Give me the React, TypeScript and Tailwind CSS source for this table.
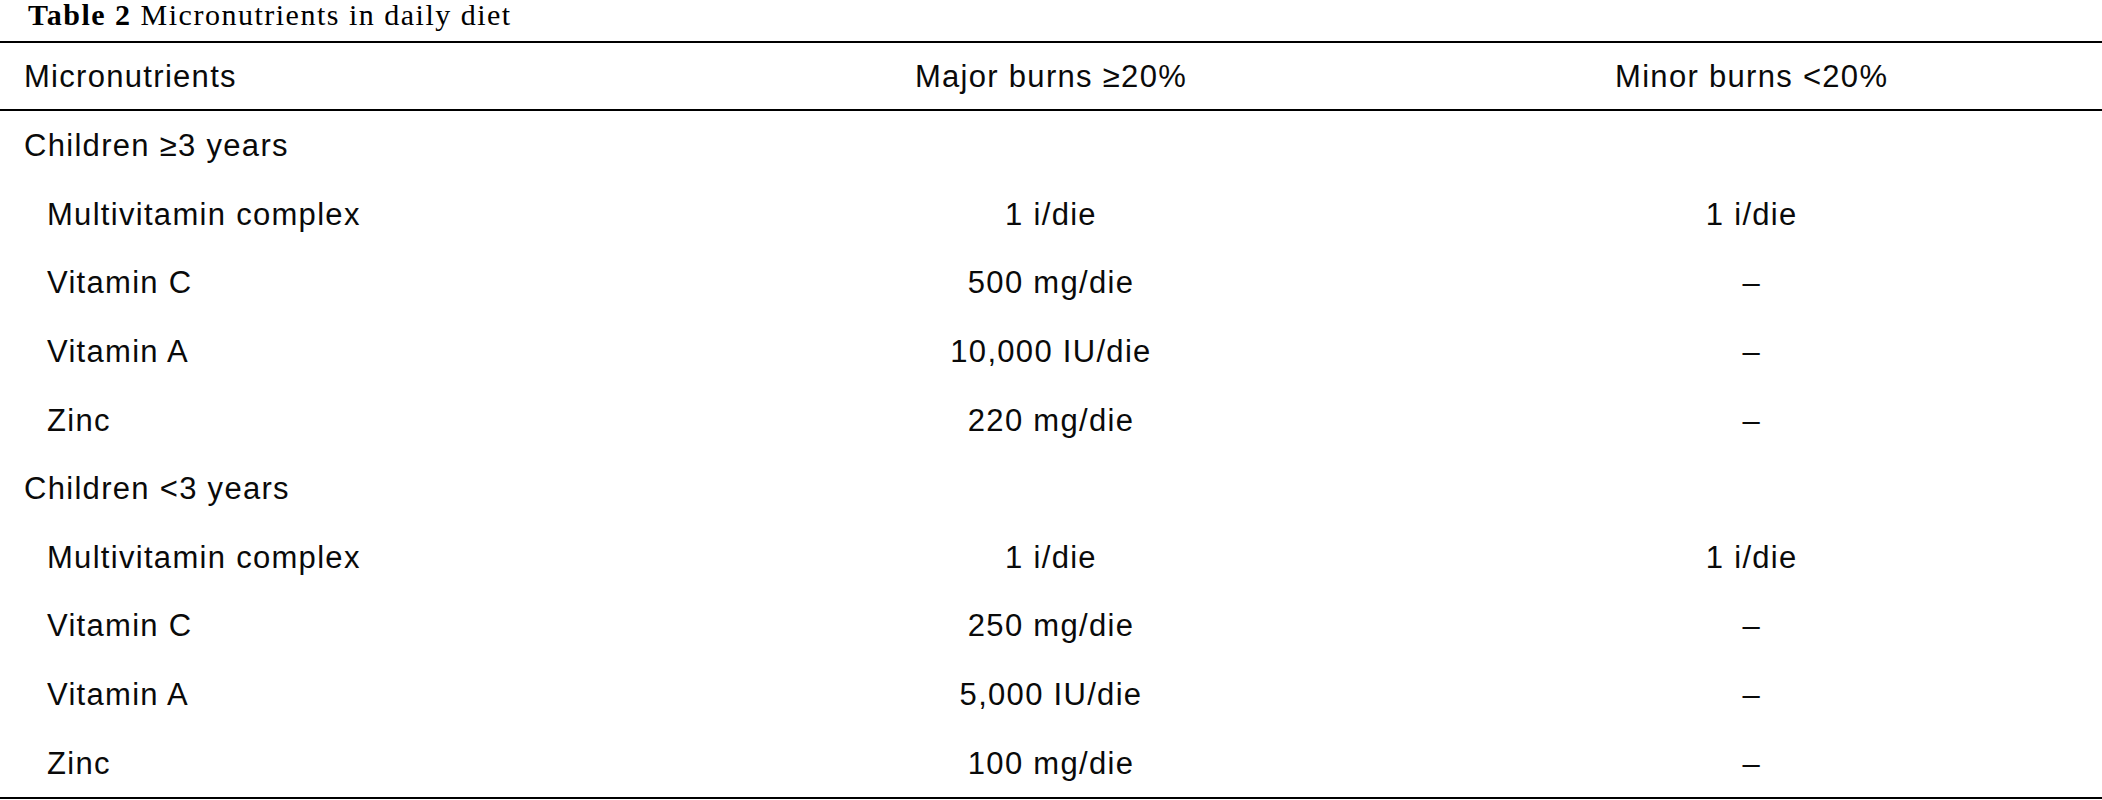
import React from "react";

type Row = { label: string; major: string; minor: string; group?: boolean };

const rows: Row[] = [
  { label: "Children ≥3 years", major: "", minor: "", group: true },
  { label: "Multivitamin complex", major: "1 i/die", minor: "1 i/die" },
  { label: "Vitamin C", major: "500 mg/die", minor: "–" },
  { label: "Vitamin A", major: "10,000 IU/die", minor: "–" },
  { label: "Zinc", major: "220 mg/die", minor: "–" },
  { label: "Children <3 years", major: "", minor: "", group: true },
  { label: "Multivitamin complex", major: "1 i/die", minor: "1 i/die" },
  { label: "Vitamin C", major: "250 mg/die", minor: "–" },
  { label: "Vitamin A", major: "5,000 IU/die", minor: "–" },
  { label: "Zinc", major: "100 mg/die", minor: "–" },
];

export default function App() {
  return (
    <div className="w-[2102px] h-[800px] bg-white text-black overflow-hidden">
      <div
        className="h-[41px] pl-[28px] pt-[2px] text-[30px] leading-[26px] tracking-[1.5px] text-black whitespace-nowrap"
        style={{ fontFamily: '"Liberation Serif", "Times New Roman", serif' }}
      >
        <span className="font-bold">Table 2</span> Micronutrients in daily diet
      </div>
      <div
        className="border-t-2 border-b-2 border-black text-[31px] leading-[40px] tracking-[1.3px] text-[#0a0a0a]"
        style={{ fontFamily: '"Liberation Sans", Arial, sans-serif' }}
      >
        <div className="grid grid-cols-3 h-[68px] items-center pt-[2px] border-b-2 border-black">
          <div className="pl-[24px]">Micronutrients</div>
          <div className="text-center">Major burns ≥20%</div>
          <div className="text-center">Minor burns &lt;20%</div>
        </div>
        {rows.map((r, i) => (
          <div key={i} className="grid grid-cols-3 h-[68.6px] items-center pt-[2px]">
            <div className={r.group ? "pl-[24px]" : "pl-[47px]"}>{r.label}</div>
            <div className="text-center">{r.major}</div>
            <div className="text-center">{r.minor}</div>
          </div>
        ))}
      </div>
    </div>
  );
}
